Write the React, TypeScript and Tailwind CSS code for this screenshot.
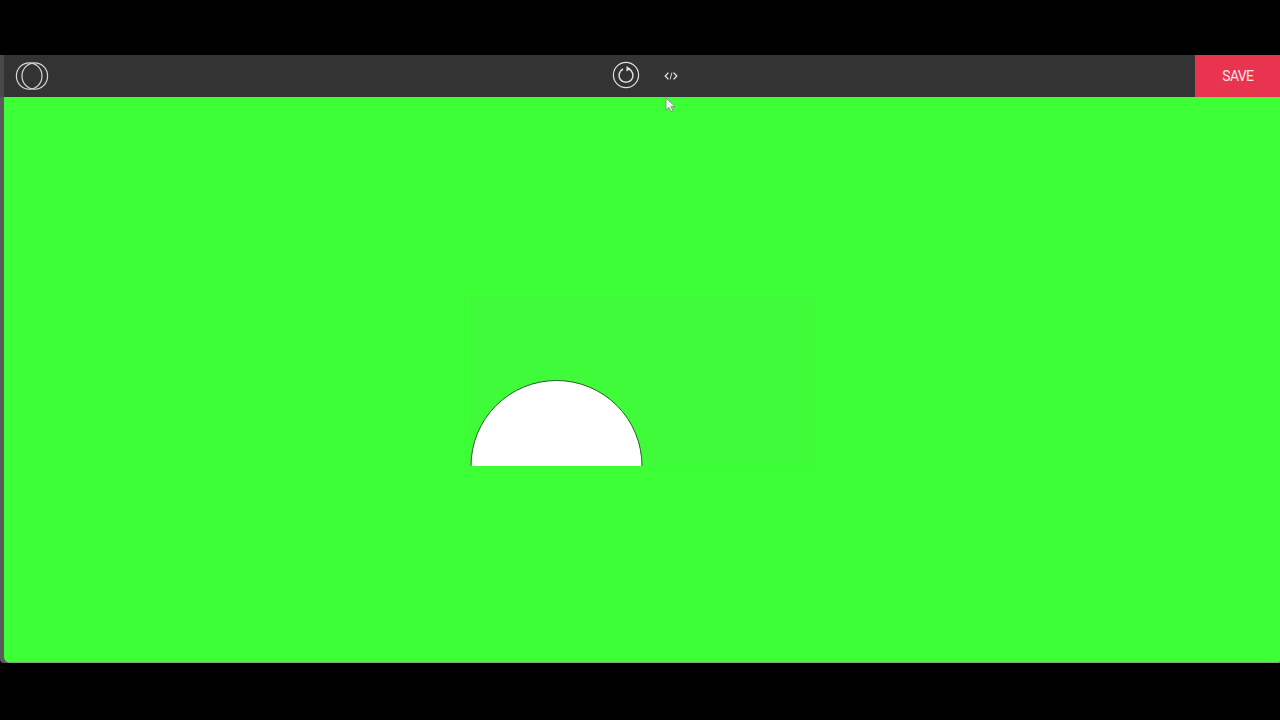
export default function App() {
  return (
    <div className="w-[1280px] h-[720px] bg-black flex flex-col overflow-hidden font-['Roboto','Liberation_Sans',sans-serif]">
      <div className="h-[55px] shrink-0" />
      <div className="h-[608px] bg-[#5a5a5a] rounded-bl-[4px] flex flex-col">
        {/* Toolbar */}
        <div className="h-[42px] shrink-0 bg-[#333333] flex items-center relative">
          <div className="w-[4px] h-full bg-[#4a4a4a]" />
          <svg width="34" height="30" viewBox="0 0 34 30" className="absolute left-[15px] top-[6px]" fill="none" stroke="#d8d8d8" strokeWidth="1.2">
            <ellipse cx="14.2" cy="15" rx="12.8" ry="13.2" />
            <ellipse cx="19.8" cy="15" rx="12.8" ry="13.2" />
          </svg>
          <svg width="28" height="28" viewBox="0 0 28 28" className="absolute left-[612px] top-[6px]" fill="none" stroke="#e0e0e0" strokeWidth="1.2">
            <circle cx="14" cy="14" r="12.6" />
            <path d="M17 8A7 7 0 1 1 11 8" strokeWidth="1.5" />
            <path d="M14.5 5l4 2.8-4 2.6z" fill="#e6e6e6" stroke="none" />
          </svg>
          <svg width="14" height="10" viewBox="0 0 14 10" className="absolute left-[664px] top-[16px]" fill="none" stroke="#e6e6e6" strokeWidth="1.3">
            <path d="M4.4 1.6L1.2 5l3.2 3.4" />
            <path d="M9.6 1.6L12.8 5 9.6 8.4" />
            <path d="M7.9 1.6L6.1 8.4" strokeWidth="0.9" />
          </svg>
          <button className="ml-auto w-[85.5px] h-full pt-[1px] pl-[1px] bg-[#e8344e] text-[#fbe3e6] text-[14px] tracking-[-0.7px]">SAVE</button>
        </div>
        {/* Stage */}
        <div className="flex-1 ml-[4px] bg-[#3dff35] border-b border-[#86a67f] rounded-bl-[6px] rounded-br-[2px] relative">
          <div className="absolute left-[466px] top-[199px] w-[342px] h-[170px] bg-[#40fb3a]" />
          <svg width="174" height="90" viewBox="0 0 174 90" className="absolute left-[466px] top-[282px]">
            <path d="M1 87A85.5 85.5 0 0 1 172 87Z" fill="#ffffff" />
            <path d="M1 87A85.5 85.5 0 0 1 172 87" fill="none" stroke="#2a5f26" strokeWidth="1" />
          </svg>
        </div>
      </div>
      {/* Cursor */}
      <svg width="12" height="16" viewBox="0 0 12 16" className="absolute left-[665px] top-[97px]">
        <path d="M1 1v12l3-2.6 2 4.2 2-.9-2-4.1h4z" fill="#f2f2f2" stroke="#6a6a6a" strokeWidth="0.6" />
      </svg>
    </div>
  );
}
